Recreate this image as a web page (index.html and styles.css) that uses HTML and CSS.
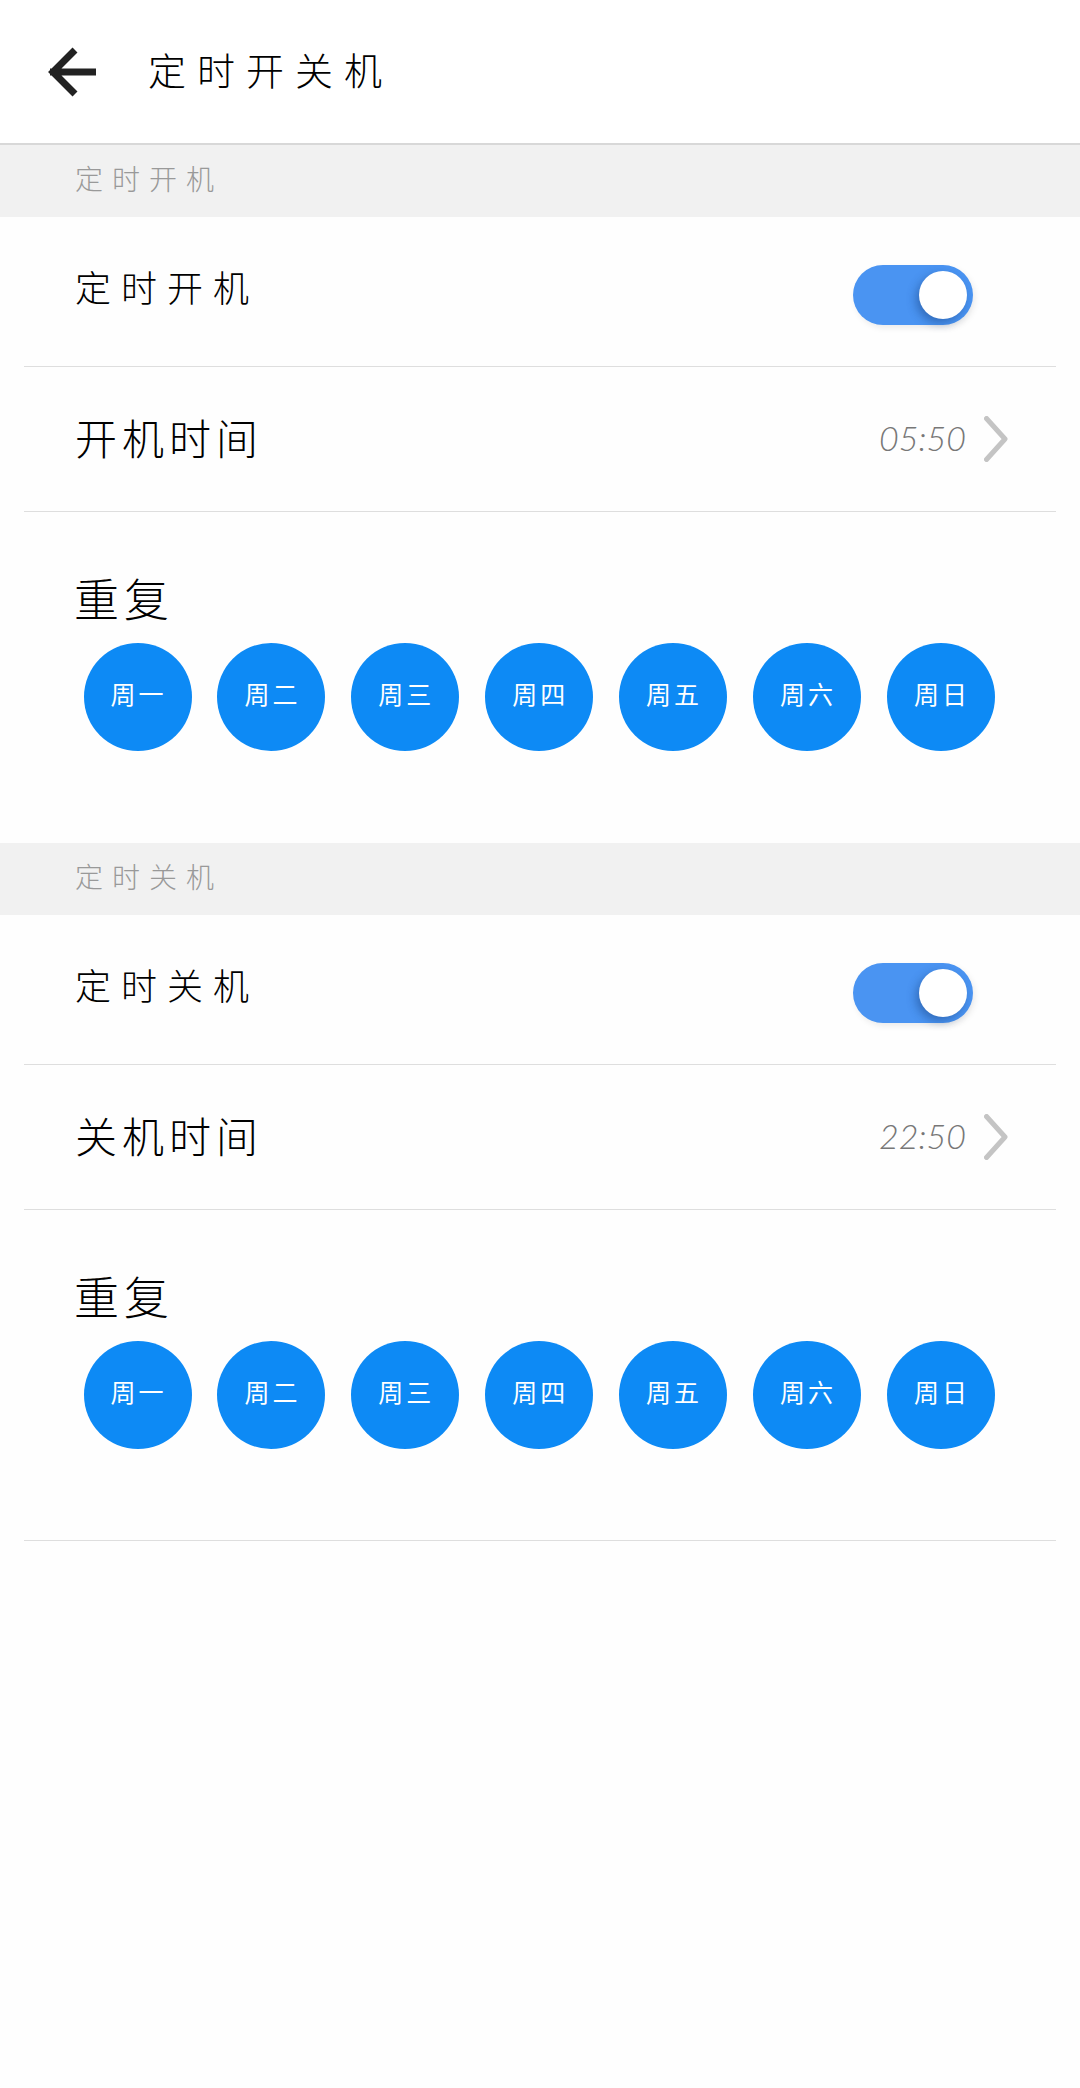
FILE: index.html
```html
<!doctype html>
<html>
  <head>
    <meta charset="utf-8">
    <title>定时开关机</title>
    <link rel="stylesheet" href="styles.css">
  </head>
  <body>
    <div id="app">
      <header class="topbar">
        <svg class="back" width="60" height="60" viewBox="0 0 60 60"><path d="M16 27H62M41 5L19 27L41 49" transform="translate(-3 3)" fill="none" stroke="#222" stroke-width="7"/></svg>
        <h1 class="title">定时开关机</h1>
      </header>

      <div class="section-label">定时开机</div>
      <div class="row row-switch">
        <span class="label-small">定时开机</span>
        <div class="toggle"><div class="knob"></div></div>
      </div>
      <div class="row row-time">
        <span class="label">开机时间</span>
        <div class="time-box">
          <span class="time">05:50</span>
          <svg class="chevron" width="24" height="46" viewBox="0 0 24 46"><path d="M2.5 2.5L21 23L2.5 43.500" fill="none" stroke="#c4c4c4" stroke-width="5" stroke-linecap="round" stroke-linejoin="round"/></svg>
        </div>
      </div>
      <div class="repeat">
        <div class="label-big">重复</div>
        <div class="days">
          <div class="day">周一</div>
          <div class="day">周二</div>
          <div class="day">周三</div>
          <div class="day">周四</div>
          <div class="day">周五</div>
          <div class="day">周六</div>
          <div class="day">周日</div>
        </div>
      </div>

      <div class="section-label">定时关机</div>
      <div class="row row-switch">
        <span class="label-small">定时关机</span>
        <div class="toggle"><div class="knob"></div></div>
      </div>
      <div class="row row-time">
        <span class="label">关机时间</span>
        <div class="time-box">
          <span class="time">22:50</span>
          <svg class="chevron" width="24" height="46" viewBox="0 0 24 46"><path d="M2.5 2.5L21 23L2.5 43.500" fill="none" stroke="#c4c4c4" stroke-width="5" stroke-linecap="round" stroke-linejoin="round"/></svg>
        </div>
      </div>
      <div class="repeat repeat-last">
        <div class="label-big">重复</div>
        <div class="days">
          <div class="day">周一</div>
          <div class="day">周二</div>
          <div class="day">周三</div>
          <div class="day">周四</div>
          <div class="day">周五</div>
          <div class="day">周六</div>
          <div class="day">周日</div>
        </div>
      </div>
    </div>
  </body>
</html>
```

FILE: styles.css
```css
* {
  margin: 0;
  padding: 0;
  box-sizing: border-box;
}

body {
  width: 1080px;
  height: 2088px;
  overflow: hidden;
  background-color: #fefefe;
  font-family: "Noto Sans CJK SC", "Noto Sans", sans-serif;
  font-weight: 300;
  color: #000;
}

.topbar {
  display: flex;
  align-items: center;
  height: 145px;
  padding-left: 37px;
  background-color: #fff;
  border-bottom: 2px solid #d8d8d8;
}

.back {
  flex: none;
}

.title {
  margin-left: 51px;
  margin-bottom: 5px;
  font-size: 38px;
  font-weight: 300;
  letter-spacing: 11px;
  line-height: 50px;
}

.section-label {
  height: 72px;
  padding-left: 75px;
  background-color: #f1f1f1;
  font-size: 28px;
  letter-spacing: 9px;
  line-height: 66px;
  color: #999;
}

.row {
  display: flex;
  align-items: center;
  justify-content: space-between;
  margin: 0 24px;
  padding-left: 51px;
  border-bottom: 1px solid #dedede;
}

.row-switch {
  height: 150px;
  padding-right: 83px;
}

.row-time {
  height: 145px;
  padding-right: 48px;
}

.label-small {
  font-size: 36px;
  letter-spacing: 10px;
  padding-bottom: 11px;
}

.label {
  font-size: 42px;
  letter-spacing: 5px;
  padding-bottom: 6px;
}

.toggle {
  display: flex;
  justify-content: flex-end;
  align-items: center;
  width: 120px;
  height: 60px;
  margin-top: 7px;
  padding-right: 6px;
  border-radius: 30px;
  background-color: #4a94f2;
  box-shadow: 2px 3px 6px rgba(0, 0, 0, 0.08);
}

.knob {
  width: 48px;
  height: 48px;
  border-radius: 50%;
  background-color: #fff;
  box-shadow: -3px 4px 10px rgba(20, 60, 120, 0.45);
}

.time-box {
  display: flex;
  align-items: center;
}

.time {
  padding-bottom: 3px;
  font-family: "Lato", sans-serif;
  font-weight: 300;
  font-style: italic;
  font-size: 34px;
  color: #777;
}

.chevron {
  margin-left: 18px;
}

.repeat {
  height: 331px;
  padding: 58px 85px 0 74px;
}

.repeat-last {
  margin: 0 24px;
  padding-left: 50px;
  padding-right: 61px;
  border-bottom: 1px solid #dedede;
}

.label-big {
  font-size: 45px;
  letter-spacing: 5px;
  line-height: 56px;
}

.days {
  display: flex;
  justify-content: space-between;
  margin-top: 17px;
  margin-left: 9.5px;
}

.day {
  display: flex;
  align-items: center;
  justify-content: center;
  width: 108px;
  height: 108px;
  padding-bottom: 8px;
  padding-left: 2px;
  border-radius: 50%;
  background-color: #0d8af5;
  color: #fff;
  font-size: 25px;
  font-weight: 400;
  letter-spacing: 3px;
}
```
